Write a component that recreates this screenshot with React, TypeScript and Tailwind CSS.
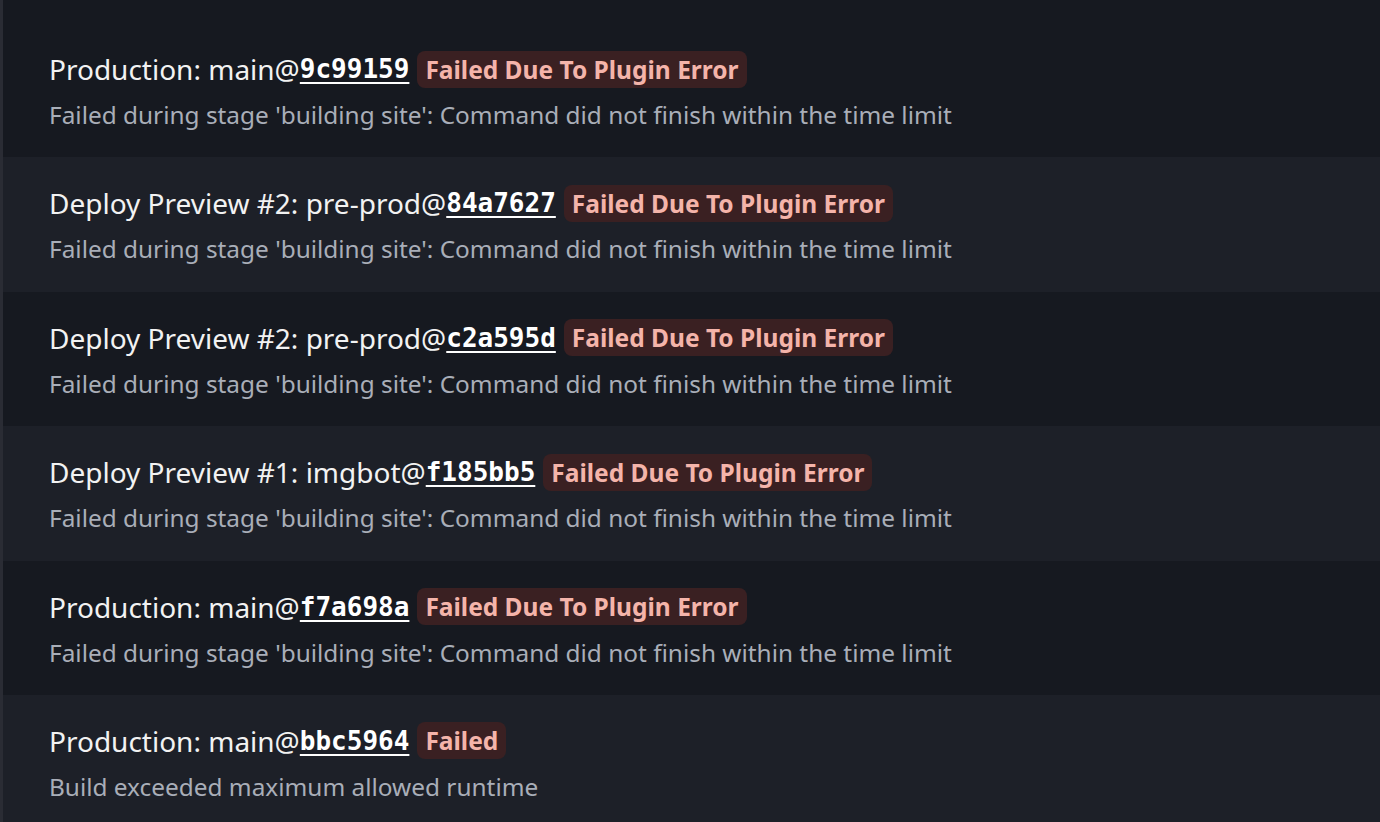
import React from "react";

type Row = { env: string; hash: string; badge: string; msg: string };

const rows: Row[] = [
  { env: "Production: main@", hash: "9c99159", badge: "Failed Due To Plugin Error", msg: "Failed during stage 'building site': Command did not finish within the time limit" },
  { env: "Deploy Preview #2: pre-prod@", hash: "84a7627", badge: "Failed Due To Plugin Error", msg: "Failed during stage 'building site': Command did not finish within the time limit" },
  { env: "Deploy Preview #2: pre-prod@", hash: "c2a595d", badge: "Failed Due To Plugin Error", msg: "Failed during stage 'building site': Command did not finish within the time limit" },
  { env: "Deploy Preview #1: imgbot@", hash: "f185bb5", badge: "Failed Due To Plugin Error", msg: "Failed during stage 'building site': Command did not finish within the time limit" },
  { env: "Production: main@", hash: "f7a698a", badge: "Failed Due To Plugin Error", msg: "Failed during stage 'building site': Command did not finish within the time limit" },
  { env: "Production: main@", hash: "bbc5964", badge: "Failed", msg: "Build exceeded maximum allowed runtime" },
];

export default function App() {
  return (
    <div
      className="w-[1380px] h-[822px] overflow-hidden bg-[#161920] border-l-[3px] border-[#2a2c34] pt-[23px]"
      style={{ fontFamily: '"Noto Sans", "Open Sans", sans-serif' }}
    >
      {rows.map((r, i) => (
        <div
          key={i}
          className={`h-[134.4px] shrink-0 pl-[46px] pt-[27px] ${i % 2 === 0 ? "bg-[#161920]" : "bg-[#1d2028]"}`}
        >
          <div className="flex items-center h-[38px] text-[28px] text-[#f2f2f2] leading-[38px] whitespace-nowrap">
            <span>{r.env}</span>
            <span
              className="underline underline-offset-[4px] decoration-[2px] font-bold text-[26px] text-white"
              style={{ fontFamily: '"DejaVu Sans Mono", "Liberation Mono", monospace' }}
            >
              {r.hash}
            </span>
            <span className="ml-[8px] h-[37px] px-[8px] rounded-[8px] bg-[#3a2022] text-[#f4b4aa] font-bold text-[24.5px] leading-[37px]">
              {r.badge}
            </span>
          </div>
          <div className="mt-[11px] h-[32px] leading-[32px] text-[24.4px] text-[#a9aeb8] whitespace-nowrap">
            {r.msg}
          </div>
        </div>
      ))}
    </div>
  );
}
